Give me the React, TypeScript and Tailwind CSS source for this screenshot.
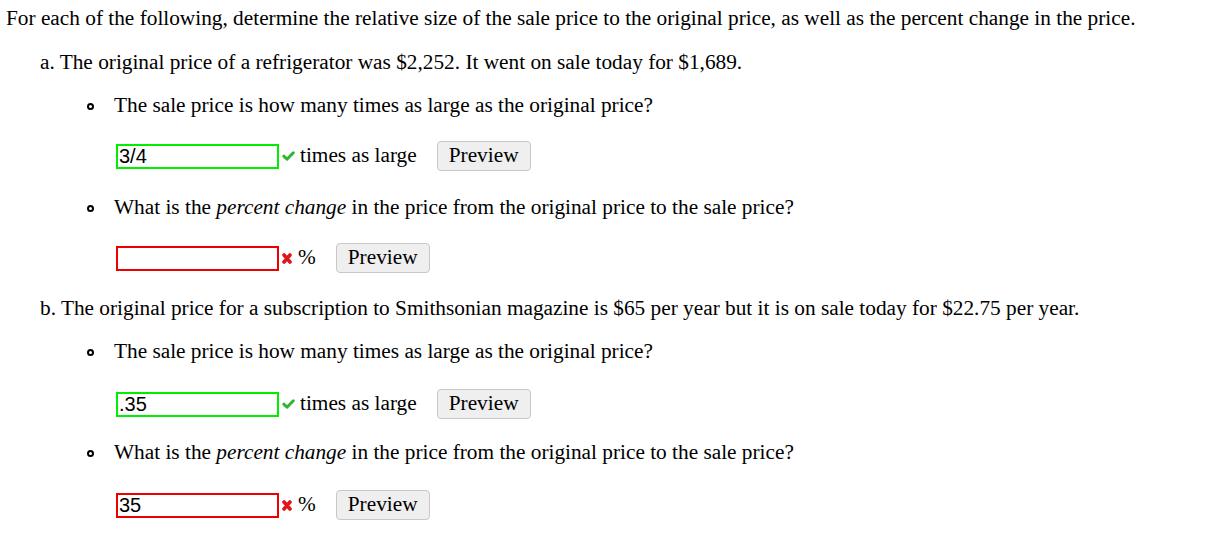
import React from "react"

function Check() {
  return (
    <svg width="13" height="10" viewBox="0 0 13 10" className="shrink-0">
      <path d="M1.8 5.2 L5 8.2 L11.3 1.8" fill="none" stroke="#2fb52f" strokeWidth="3" strokeLinecap="round" strokeLinejoin="round" />
    </svg>
  )
}

function Cross() {
  return (
    <svg width="10" height="11" viewBox="0 0 10 11" className="shrink-0">
      <path d="M2 2 L8 9 M8 2 L2 9" stroke="#e0161b" strokeWidth="3.6" strokeLinecap="round" />
    </svg>
  )
}

function Bullet({ children, className = "" }: { children: React.ReactNode; className?: string }) {
  return (
    <div className={`flex items-center h-6 ${className}`}>
      <span className="w-[7px] h-[7px] rounded-full border-2 border-black ml-[87px] mr-[20px] shrink-0" />
      <span>{children}</span>
    </div>
  )
}

function AnswerRow({
  value,
  ok,
  unit,
  className = "",
}: {
  value: string
  ok: boolean
  unit: string
  className?: string
}) {
  return (
    <div className={`flex items-center h-8 pl-[116px] ${className}`}>
      <input
        readOnly
        value={value}
        className={`w-[163px] h-[25px] border-2 px-[1px] text-[20px] leading-none text-black outline-none font-['Liberation_Sans',Arial,sans-serif] ${
          ok ? "border-[#00ee00]" : "border-[#ee0000]"
        }`}
      />
      <span className="ml-[3px] flex items-center">{ok ? <Check /> : <Cross />}</span>
      <span className={ok ? "ml-[5px]" : "ml-[6px]"}>{unit}</span>
      <button className="ml-[20px] h-[30px] px-[11px] bg-[#efefef] border border-[#c8c8c8] rounded-[4px] text-black leading-none">
        Preview
      </button>
    </div>
  )
}

export default function App() {
  return (
    <div className="bg-white w-[1224px] h-[558px] font-['Liberation_Serif','Times_New_Roman',serif] text-[21.3px] text-black pt-[7px] overflow-hidden">
      <div className="h-6 flex items-center pl-[6px] whitespace-nowrap">
        For each of the following, determine the relative size of the sale price to the original price, as well as the percent change in the price.
      </div>

      <div className="h-6 flex items-center pl-[40px] mt-[20px]">
        a. The original price of a refrigerator was $2,252. It went on sale today for $1,689.
      </div>
      <Bullet className="mt-[19px]">The sale price is how many times as large as the original price?</Bullet>
      <AnswerRow className="mt-[22px]" value="3/4" ok unit="times as large" />
      <Bullet className="mt-[24px]">
        What is the <i>percent change</i> in the price from the original price to the sale price?
      </Bullet>
      <AnswerRow className="mt-[22px]" value="" ok={false} unit="%" />

      <div className="h-6 flex items-center pl-[40px] mt-[23px] whitespace-nowrap">
        b. The original price for a subscription to Smithsonian magazine is $65 per year but it is on sale today for $22.75 per year.
      </div>
      <Bullet className="mt-[19px]">The sale price is how many times as large as the original price?</Bullet>
      <AnswerRow className="mt-[24px]" value=".35" ok unit="times as large" />
      <Bullet className="mt-[21px]">
        What is the <i>percent change</i> in the price from the original price to the sale price?
      </Bullet>
      <AnswerRow className="mt-[24px]" value="35" ok={false} unit="%" />
    </div>
  )
}
